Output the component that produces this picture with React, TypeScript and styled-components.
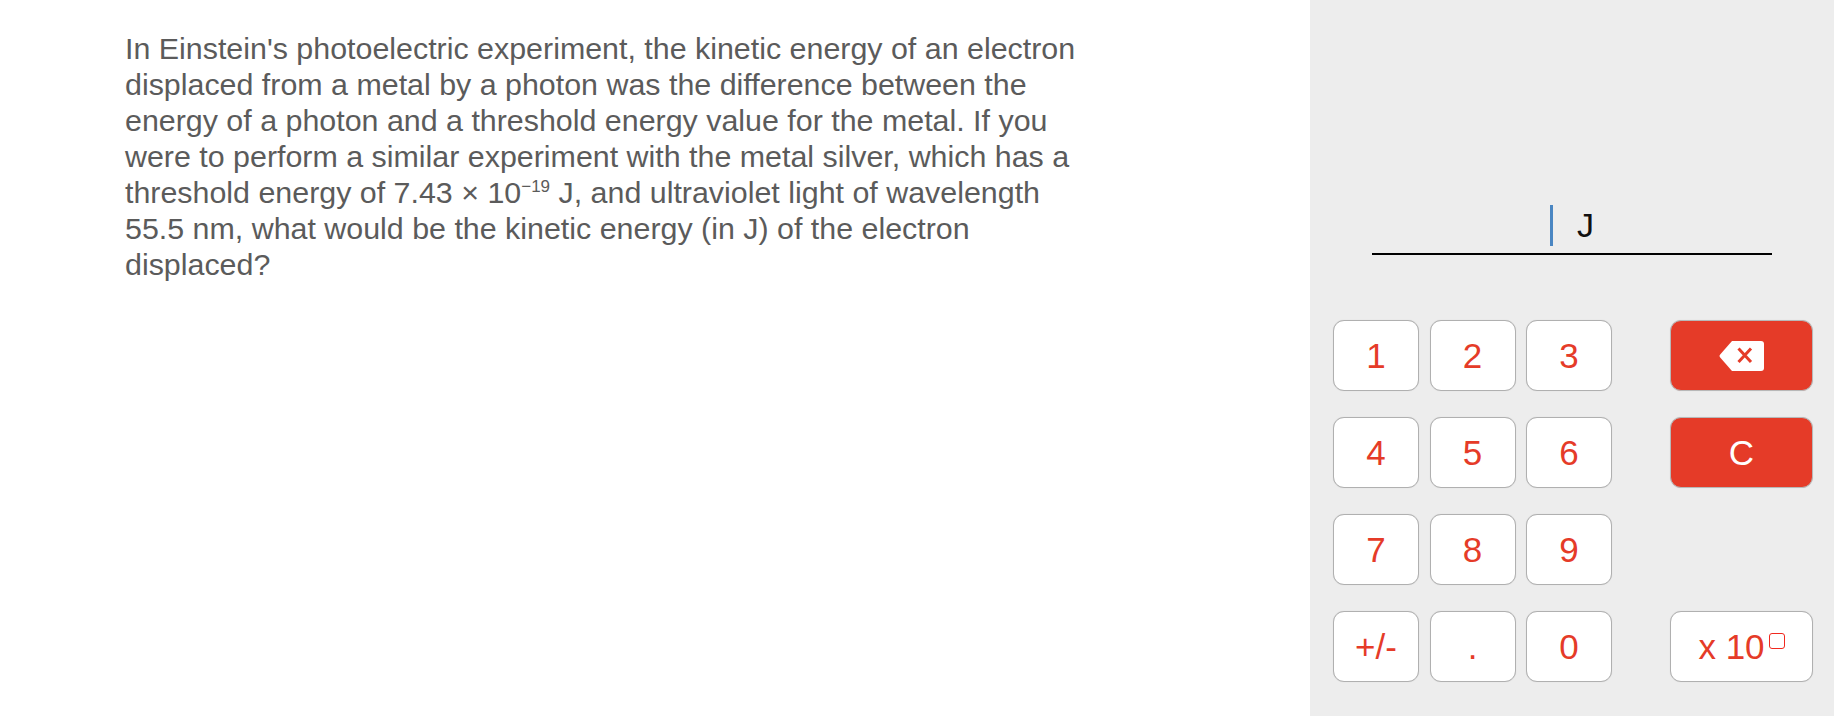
import React from 'react';
import styled, { createGlobalStyle } from 'styled-components';

const GlobalStyle = createGlobalStyle`
  html, body {
    margin: 0;
    padding: 0;
    background: #ffffff;
  }
  body {
    font-family: "Liberation Sans", Arial, sans-serif;
  }
`;

const RED = '#e53b28';

const Root = styled.div`
  display: flex;
  min-height: 100vh;
  width: 100%;
`;

const QuestionArea = styled.div`
  flex: 1;
  padding: 30px 0 0 125px;
`;

const Question = styled.p`
  margin: 0;
  width: 970px;
  font-size: 30.4px;
  line-height: 36px;
  color: #5b5b5b;

  sup {
    font-size: 17px;
    line-height: 0;
    vertical-align: 11px;
  }
`;

const Panel = styled.div`
  width: 524px;
  flex-shrink: 0;
  background: #ededed;
  display: flex;
  flex-direction: column;
  padding: 0 21px 0 23px;
  box-sizing: border-box;
`;

const AnswerField = styled.div`
  width: 400px;
  height: 51px;
  margin: 195px auto 0;
  border-bottom: 2px solid #000;
  display: flex;
  justify-content: center;
  align-items: flex-end;
  padding-bottom: 7px;
  box-sizing: content-box;
  position: relative;
  left: -1px;
`;

const Caret = styled.span`
  width: 3px;
  height: 41px;
  background: #4a86c2;
`;

const Unit = styled.span`
  font-size: 34px;
  line-height: 1;
  color: #111;
  margin: 0 0 4px 24px;
`;

const Keypad = styled.div`
  display: flex;
  justify-content: space-between;
  margin-top: 65px;
`;

const DigitGrid = styled.div`
  display: grid;
  grid-template-columns: repeat(3, 86px);
  grid-auto-rows: 71px;
  column-gap: 10.5px;
  row-gap: 26px;
`;

const ActionColumn = styled.div`
  display: grid;
  grid-template-columns: 143px;
  grid-template-rows: repeat(4, 71px);
  row-gap: 26px;
`;

const Key = styled.button<{ $accent?: boolean; $row?: number }>`
  display: flex;
  align-items: center;
  justify-content: center;
  padding: 0;
  margin: 0;
  border: 1px solid ${(p) => (p.$accent ? '#b8b8b8' : '#b0b0b0')};
  border-radius: 11px;
  background: ${(p) => (p.$accent ? RED : '#ffffff')};
  color: ${(p) => (p.$accent ? '#ffffff' : RED)};
  font-family: "Liberation Sans", Arial, sans-serif;
  font-size: 35px;
  line-height: 1;
  box-shadow: 0 0 1px rgba(0, 0, 0, 0.15);
  cursor: pointer;
  ${(p) => (p.$row ? `grid-row: ${p.$row};` : '')}
`;

const ExpLabel = styled.span`
  display: inline-flex;
  align-items: flex-start;
`;

const ExpBox = styled.span`
  width: 14px;
  height: 14px;
  margin: 4px 0 0 4px;
  border: 1.5px solid #f0281e;
  border-radius: 3px;
`;

const BackspaceIcon: React.FC = () => (
  <svg width="45" height="30" viewBox="0 0 45 30" aria-hidden="true">
    <path
      d="M13 0 H42 A3 3 0 0 1 45 3 V27 A3 3 0 0 1 42 30 H13 L1.2 16.6 A2.5 2.5 0 0 1 1.2 13.4 Z"
      fill="#ffffff"
    />
    <path d="M19.5 7.5 L32 21 M32 7.5 L19.5 21" stroke={RED} strokeWidth="3" />
  </svg>
);

const digits = ['1', '2', '3', '4', '5', '6', '7', '8', '9', '+/-', '.', '0'];

const App: React.FC = () => {
  return (
    <Root>
      <GlobalStyle />
      <QuestionArea>
        <Question>
          In Einstein's photoelectric experiment, the kinetic energy of an electron displaced from
          a metal by a photon was the difference between the energy of a photon and a threshold
          energy value for the metal. If you were to perform a similar experiment with the metal
          silver, which has a threshold energy of 7.43 × 10<sup>−19</sup> J, and ultraviolet light
          of wavelength 55.5 nm, what would be the kinetic energy (in J) of the electron displaced?
        </Question>
      </QuestionArea>
      <Panel>
        <AnswerField>
          <Caret />
          <Unit>J</Unit>
        </AnswerField>
        <Keypad>
          <DigitGrid>
            {digits.map((d) => (
              <Key key={d} type="button">
                {d}
              </Key>
            ))}
          </DigitGrid>
          <ActionColumn>
            <Key type="button" $accent $row={1} aria-label="backspace">
              <BackspaceIcon />
            </Key>
            <Key type="button" $accent $row={2}>
              C
            </Key>
            <Key type="button" $row={4}>
              <ExpLabel>
                x 10
                <ExpBox />
              </ExpLabel>
            </Key>
          </ActionColumn>
        </Keypad>
      </Panel>
    </Root>
  );
};

export default App;
